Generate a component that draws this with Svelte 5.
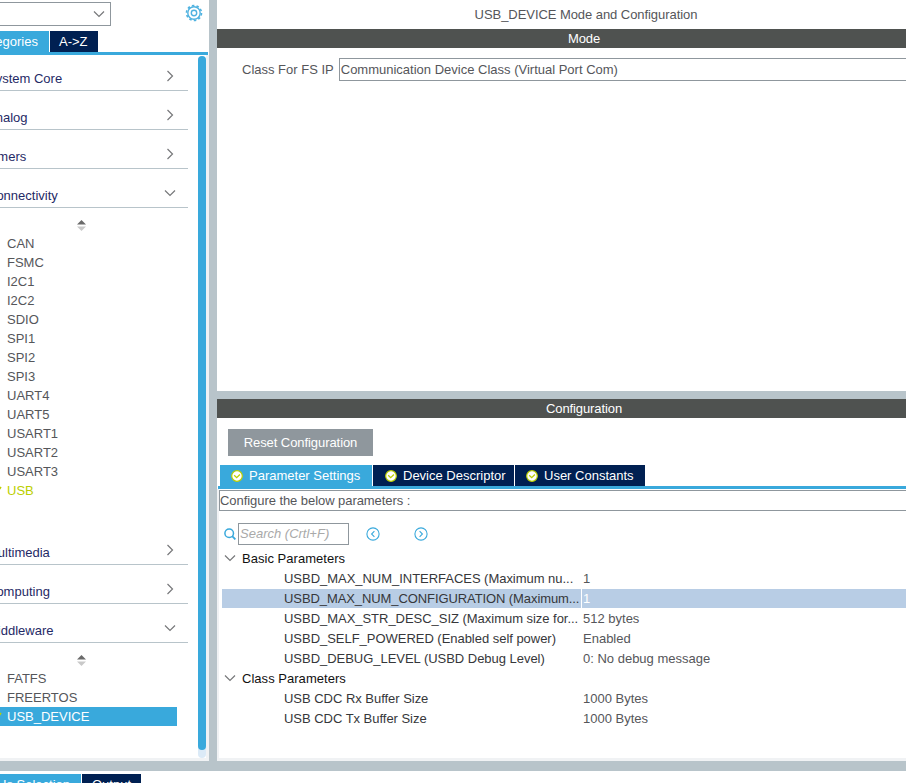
<script lang="ts">
    interface Category {
        name: string;
        items?: string[];
    }

    interface Param {
        name: string;
        value: string;
    }

    const categories: Category[] = [
        { name: "System Core" },
        { name: "Analog" },
        { name: "Timers" },
        {
            name: "Connectivity",
            items: [
                "CAN",
                "FSMC",
                "I2C1",
                "I2C2",
                "SDIO",
                "SPI1",
                "SPI2",
                "SPI3",
                "UART4",
                "UART5",
                "USART1",
                "USART2",
                "USART3",
                "USB",
            ],
        },
        { name: "Multimedia" },
        { name: "Computing" },
        { name: "Middleware", items: ["FATFS", "FREERTOS", "USB_DEVICE"] },
    ];

    const enabled = ["USB", "USB_DEVICE"];
    let selected = $state("USB_DEVICE");

    const tabs = ["Parameter Settings", "Device Descriptor", "User Constants"];
    let activeTab = $state("Parameter Settings");

    const groups: { title: string; params: Param[] }[] = [
        {
            title: "Basic Parameters",
            params: [
                { name: "USBD_MAX_NUM_INTERFACES (Maximum nu...", value: "1" },
                { name: "USBD_MAX_NUM_CONFIGURATION (Maximum...", value: "1" },
                { name: "USBD_MAX_STR_DESC_SIZ (Maximum size for...", value: "512 bytes" },
                { name: "USBD_SELF_POWERED (Enabled self power)", value: "Enabled" },
                { name: "USBD_DEBUG_LEVEL (USBD Debug Level)", value: "0: No debug message" },
            ],
        },
        {
            title: "Class Parameters",
            params: [
                { name: "USB CDC Rx Buffer Size", value: "1000 Bytes" },
                { name: "USB CDC Tx Buffer Size", value: "1000 Bytes" },
            ],
        },
    ];
    let selectedParam = $state("USBD_MAX_NUM_CONFIGURATION (Maximum...");
</script>

{#snippet chevron(open: boolean)}
    <svg class="chevron" width="12" height="12" viewBox="0 0 12 12">
        <path d={open ? "M1 3.5 L6 8.5 L11 3.5" : "M3.5 1 L8.5 6 L3.5 11"} />
    </svg>
{/snippet}

{#snippet check()}
    <svg class="check" width="12" height="12" viewBox="0 0 12 12">
        <circle cx="6" cy="6" r="5.3" />
        <path d="M3.2 5.2 L5.7 7.7 L8.9 4.5" />
    </svg>
{/snippet}

<div class="app">
    <div class="workspace">
        <aside class="sidebar">
            <div class="filter">
                <div class="combo">{@render chevron(true)}</div>
                <svg class="gear" width="18" height="18" viewBox="0 0 18 18">
                    <circle cx="9" cy="9" r="6.2" />
                    <circle class="teeth" cx="9" cy="9" r="7.5" />
                    <circle cx="9" cy="9" r="2.7" />
                </svg>
            </div>
            <div class="side-tabs">
                <div class="tab categories active">Categories</div>
                <div class="tab az">A-&gt;Z</div>
            </div>
            <div class="side-body">
                <div class="tree">
                    {#each categories as cat (cat.name)}
                        <div class="category">
                            <span>{cat.name}</span>
                            {@render chevron(!!cat.items)}
                        </div>
                        {#if cat.items}
                            <div class="items">
                                <svg class="sorter" width="9" height="11" viewBox="0 0 9 11">
                                    <path class="up" d="M0 4.6 L4.5 0 L9 4.6z" />
                                    <path class="down" d="M0 6.4 L4.5 11 L9 6.4z" />
                                </svg>
                                {#each cat.items as item (item)}
                                    <div
                                        class="item"
                                        class:enabled={enabled.includes(item)}
                                        class:selected={selected === item}
                                    >
                                        <span class="mark">
                                            {#if enabled.includes(item)}
                                                <svg width="10" height="9" viewBox="0 0 10 9">
                                                    <path d="M1 4.5 L4 8 L9 1" />
                                                </svg>
                                            {/if}
                                        </span>
                                        {item}
                                    </div>
                                {/each}
                            </div>
                        {/if}
                    {/each}
                </div>
                <div class="scrollbar"><div class="thumb"></div></div>
            </div>
        </aside>

        <main class="details">
            <section class="mode">
                <div class="title">USB_DEVICE Mode and Configuration</div>
                <h2>Mode</h2>
                <div class="field">
                    <span>Class For FS IP</span>
                    <div class="select">Communication Device Class (Virtual Port Com)</div>
                </div>
            </section>

            <section class="config">
                <h2>Configuration</h2>
                <button class="reset">Reset Configuration</button>
                <div class="config-tabs">
                    {#each tabs as tab (tab)}
                        <div class="tab" class:active={activeTab === tab}>
                            {@render check()}
                            <span>{tab}</span>
                        </div>
                    {/each}
                </div>
                <div class="config-body">
                    <div class="hint">Configure the below parameters :</div>
                    <div class="search">
                        <svg class="line" width="12" height="12" viewBox="0 0 12 12">
                            <circle cx="5.2" cy="5.2" r="4.3" stroke-width="1.5" />
                            <path d="M8.2 8.2 L11.4 11.4" stroke-width="1.8" />
                        </svg>
                        <div class="search-box">Search (Crtl+F)</div>
                        <svg class="line prev" width="14" height="14" viewBox="0 0 14 14">
                            <circle cx="7" cy="7" r="6.1" />
                            <path d="M8.4 4.2 L5.6 7 L8.4 9.8" />
                        </svg>
                        <svg class="line next" width="14" height="14" viewBox="0 0 14 14">
                            <circle cx="7" cy="7" r="6.1" />
                            <path d="M5.6 4.2 L8.4 7 L5.6 9.8" />
                        </svg>
                    </div>
                    {#each groups as group (group.title)}
                        <div class="group">
                            {@render chevron(true)}
                            <span>{group.title}</span>
                        </div>
                        {#each group.params as p (p.name)}
                            <div class="param" class:selected={selectedParam === p.name}>
                                <span class="name">{p.name}</span>
                                <span class="value">{p.value}</span>
                            </div>
                        {/each}
                    {/each}
                </div>
            </section>
        </main>
    </div>

    <footer>
        <div class="tab mcus active">MCUs Selection</div>
        <div class="tab output">Output</div>
    </footer>
</div>

<style>
    :global(body) {
        overflow: hidden;
    }

    .app {
        width: 906px;
        height: 783px;
        overflow: hidden;
        background: #fff;
        color: #55565a;
        font: 13px/19px "Liberation Sans", Arial, sans-serif;
        white-space: nowrap;
    }
    .app * {
        box-sizing: border-box;
    }

    .workspace {
        display: flex;
        gap: 8px;
        height: 771px;
        padding-bottom: 10px;
        background: #b8c4ca;
    }

    svg {
        display: block;
        flex: none;
        fill: none;
    }
    .chevron {
        stroke: #77787a;
        stroke-width: 1.2;
    }

    .tab {
        flex: none;
        display: flex;
        align-items: center;
        height: 21px;
        color: #fff;
        background: #002052;
    }
    .tab.active {
        background: #39a9dc;
    }

    /* Left column. */
    .sidebar {
        display: flex;
        flex-direction: column;
        flex: none;
        width: 209px;
        background: #fff;
    }

    .filter {
        display: flex;
        justify-content: space-between;
        height: 31px;
        padding: 2px 6px 0 0;
    }
    .combo {
        display: flex;
        align-items: center;
        justify-content: flex-end;
        width: 111px;
        height: 24px;
        padding-right: 5px;
        border: 1px solid #8f979d;
        border-left: 0;
    }
    .gear {
        margin-top: 2px;
        stroke: #4fb2e0;
        stroke-width: 1.4;
    }
    /* Ten evenly spaced teeth around the rim. */
    .teeth {
        stroke-width: 1.6;
        stroke-dasharray: 2.5 2.212;
    }

    .side-tabs {
        display: flex;
        gap: 1px;
        height: 24px;
        margin-right: 1px;
        border-bottom: 3px solid #39a9dc;
    }
    .categories {
        justify-content: flex-end;
        width: 49px;
        padding-right: 11px;
        overflow: hidden;
    }
    .az {
        width: 48px;
        padding-left: 9px;
    }

    .side-body {
        display: flex;
        flex: 1;
        min-height: 0;
        border: solid #f0f2f4;
        border-width: 0 3px 3px 0;
    }
    .tree {
        flex: 1;
        padding: 10px 10px 0 0;
    }
    .category {
        display: flex;
        align-items: center;
        justify-content: space-between;
        height: 26px;
        margin-bottom: 13px;
        margin-left: -13px;
        padding: 2px 12px 0 0;
        border-bottom: 1px solid #b8c4ca;
        color: #1f2a66;
    }
    .category .chevron {
        margin-top: -5px;
    }

    .items {
        margin: -13px 11px 39px -10px;
    }
    .items::before {
        content: "";
        display: block;
        height: 12px;
    }
    .sorter {
        margin: 0 0 3px 87px;
    }
    .up {
        fill: #6a6a6a;
    }
    .down {
        fill: #c9c9c9;
    }

    .item {
        display: flex;
        height: 19px;
    }
    .item.enabled {
        color: #bccf00;
    }
    .item.selected {
        color: #fff;
        background: #39a9dc;
    }
    .mark {
        width: 17px;
        padding: 5px 0 0 2px;
    }
    .mark svg {
        stroke: #bccf00;
        stroke-width: 1.6;
    }

    .scrollbar {
        width: 8px;
        margin-top: 1px;
        border-radius: 4px;
        background: #dbeaf7;
    }
    .thumb {
        height: 694px;
        border-radius: 4px;
        background: #39a9dc;
    }

    /* The right column runs past the window's edge, so headings centre on it. */
    .details {
        display: flex;
        flex-direction: column;
        flex: none;
        gap: 8px;
        width: 734px;
    }
    section {
        background: #fff;
    }
    h2 {
        height: 19px;
        margin: 0;
        font-size: 13px;
        font-weight: normal;
        line-height: 19px;
        letter-spacing: -0.1px;
        text-align: center;
        color: #fff;
        background: #4f5250;
    }

    .mode {
        height: 391px;
    }
    .title {
        height: 29px;
        padding-left: 4px;
        line-height: 29px;
        letter-spacing: -0.06px;
        text-align: center;
    }
    .field {
        display: flex;
        align-items: center;
        gap: 5px;
        padding: 10px 0 0 25px;
    }
    .select {
        flex: 1;
        height: 23px;
        padding-left: 1px;
        border: 1px solid #8f979d;
        line-height: 21px;
    }

    .config {
        display: flex;
        flex-direction: column;
        flex: 1;
    }
    .reset {
        width: 145px;
        height: 27px;
        margin: 11px 0 9px 11px;
        padding: 0;
        border: 0;
        color: #fff;
        background: #8f979d;
        font: inherit;
        letter-spacing: -0.07px;
    }
    .config-tabs {
        display: grid;
        grid-template-columns: 152px 141px 130px;
        gap: 1px;
        height: 24px;
        margin-left: 1px;
        padding-left: 2px;
        border-bottom: 3px solid #39a9dc;
    }
    .config-tabs .tab {
        gap: 6px;
        padding-left: 11px;
    }
    .config-tabs .tab:nth-child(2) {
        padding-left: 12px;
    }
    .check circle {
        fill: #fff;
        stroke: #bccf00;
        stroke-width: 1.2;
    }
    .check path {
        stroke: #bccf00;
        stroke-width: 1.3;
    }

    .config-body {
        flex: 1;
        padding-top: 1px;
        border: solid #f0f2f4;
        border-width: 0 0 3px 2px;
    }
    .hint {
        height: 21px;
        border: 1px solid #8f979d;
        letter-spacing: -0.06px;
    }
    .search {
        display: flex;
        align-items: center;
        height: 37px;
        padding: 9px 0 0 5px;
    }
    .line {
        stroke: #39a9dc;
        stroke-width: 1.1;
    }
    .search-box {
        width: 111px;
        height: 22px;
        margin-left: 2px;
        padding-left: 1px;
        border: 1px solid #8f979d;
        color: #a9a9a9;
        font-style: italic;
        line-height: 20px;
    }
    .prev {
        margin-left: 17px;
    }
    .next {
        margin-left: 34px;
    }

    .group {
        display: flex;
        align-items: center;
        gap: 6px;
        height: 20px;
        padding-left: 5px;
        color: #111;
        letter-spacing: 0.03px;
    }
    .param {
        display: grid;
        grid-template-columns: 359px 1fr;
        gap: 1px;
        height: 20px;
        margin-left: 3px;
        padding-top: 1px;
    }
    .name {
        padding-left: 62px;
        color: #36373a;
        letter-spacing: -0.03px;
    }
    .selected .name {
        letter-spacing: -0.09px;
    }
    .value {
        padding-left: 1px;
    }
    .selected .name,
    .selected .value {
        background: #b8cde5;
    }
    .selected .value {
        color: #fff;
    }

    footer {
        display: flex;
        gap: 1px;
        padding-top: 3px;
    }
    .mcus {
        justify-content: flex-end;
        width: 81px;
        padding-right: 11px;
        overflow: hidden;
    }
    .output {
        width: 59px;
        padding-left: 10px;
    }
</style>
